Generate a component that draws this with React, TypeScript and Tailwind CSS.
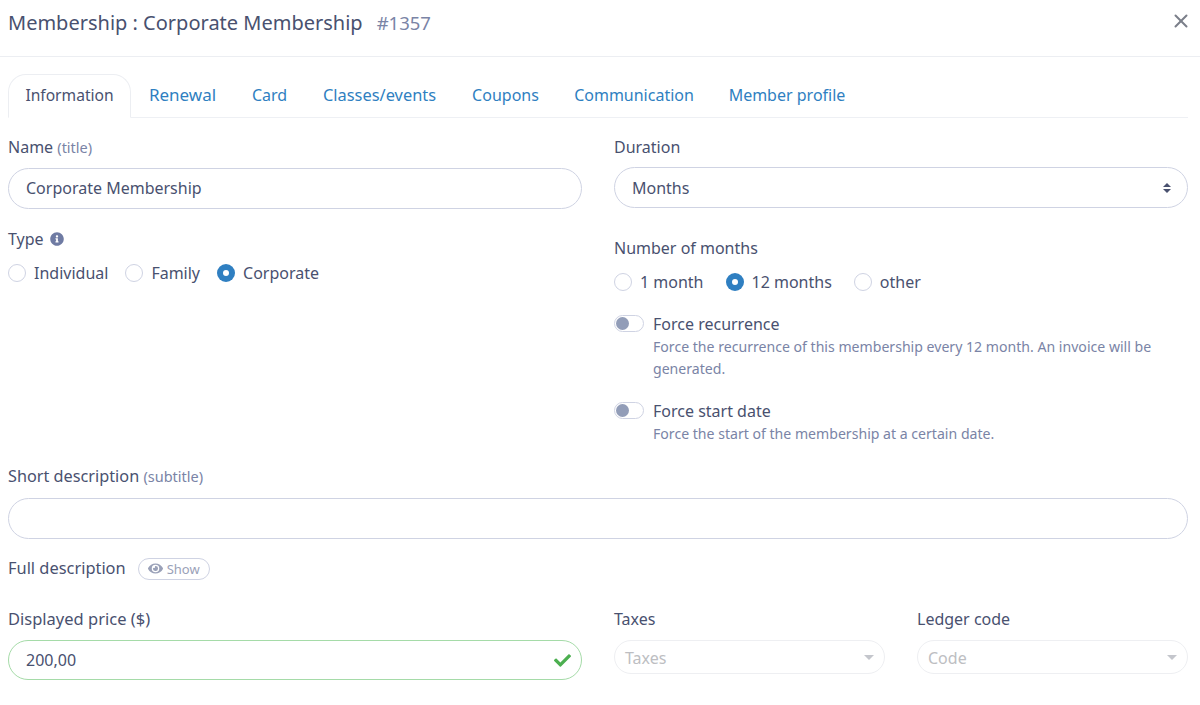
import React from 'react';
import { X } from 'lucide-react';
import { FaCheck, FaEye, FaInfoCircle } from 'react-icons/fa';

const Radio = ({ label, checked = false }: { label: string; checked?: boolean }) => (
  <div className="flex items-center gap-[8px]">
    {checked ? (
      <span className="flex h-[18px] w-[18px] items-center justify-center rounded-full bg-[#2f7fc1]">
        <span className="h-[6px] w-[6px] rounded-full bg-white" />
      </span>
    ) : (
      <span className="h-[18px] w-[18px] rounded-full border border-[#cfd3e3] bg-white" />
    )}
    <span>{label}</span>
  </div>
);

const Toggle = ({ title, children }: { title: string; children: React.ReactNode }) => (
  <div className="flex gap-[9px]">
    <span className="mt-[3px] flex h-[17px] w-[30px] shrink-0 items-center rounded-full border border-[#cfd3e3] bg-white pl-[1px]">
      <span className="h-[13px] w-[13px] rounded-full bg-[#929db8]" />
    </span>
    <div>
      <div className="leading-[24px]">{title}</div>
      <div className="text-[14.1px] leading-[22px] text-[#7a84a6]">{children}</div>
    </div>
  </div>
);

const Caret = () => (
  <span className="h-0 w-0 border-x-[5px] border-t-[5px] border-x-transparent border-t-[#c4c6cc]" />
);

const DisabledSelect = ({ text }: { text: string }) => (
  <div className="flex h-[34px] items-center justify-between rounded-full border border-[#eeeff2] pl-[10px] pr-[10px] text-[#bdbec2]">
    <span className="pt-[2px]">{text}</span>
    <Caret />
  </div>
);

const tabs = [
  { label: 'Renewal', cls: 'w-[103px] text-[17px]' },
  { label: 'Card', cls: 'w-[71px]' },
  { label: 'Classes/events', cls: 'w-[149px] text-[16.4px]' },
  { label: 'Coupons', cls: 'w-[103px]' },
  { label: 'Communication', cls: 'w-[154px]' },
  { label: 'Member profile', cls: 'w-[152px]' },
];

const App = () => {
  return (
    <div className="h-[705px] w-[1200px] overflow-hidden bg-white font-['Noto_Sans',sans-serif] text-[16px] text-[#49516f]">
      {/* Header */}
      <div className="flex h-[57px] items-start justify-between border-b border-[#eceef2] px-2 pt-[7px]">
        <div className="flex items-center leading-[32px]">
          <span className="text-[20px]">Membership : Corporate Membership</span>
          <span className="ml-[14px] text-[18.5px] text-[#7a84a6]">#1357</span>
        </div>
        <X className="mt-[3px] h-[22px] w-[22px] text-[#7b7f8a]" strokeWidth={2.2} />
      </div>

      <div className="pl-2 pr-3">
        {/* Tabs */}
        <div className="mt-[17px] flex h-[44px] border-b border-[#eef0f4]">
          <div className="mb-[-1px] flex h-[44px] w-[123px] items-center justify-center rounded-t-[18px] border border-b-white border-[#eceef2] bg-white text-[15.6px]">
            Information
          </div>
          {tabs.map((t) => (
            <div key={t.label} className={`flex items-center justify-center pb-[1px] text-[#2f7fc1] ${t.cls}`}>
              {t.label}
            </div>
          ))}
        </div>

        {/* Top columns */}
        <div className="mt-[17px] grid grid-cols-2 gap-x-[32px]">
          <div>
            <div className="leading-[24px]">
              Name <span className="text-[14.5px] text-[#7a84a6]">(title)</span>
            </div>
            <div className="mt-[9px] flex h-[41px] items-center rounded-full border border-[#cfd3e3] px-[17px] pb-[2px]">
              Corporate Membership
            </div>
            <div className="mt-[18px] flex items-center gap-[6px] leading-[24px]">
              Type
              <FaInfoCircle className="h-[14px] w-[14px] text-[#6f7ba3]" />
            </div>
            <div className="mt-[10px] flex gap-[17px] leading-[24px]">
              <Radio label="Individual" />
              <Radio label="Family" />
              <Radio label="Corporate" checked />
            </div>
          </div>

          <div>
            <div className="leading-[24px]">Duration</div>
            <div className="mt-[8px] flex h-[41px] items-center justify-between rounded-full border border-[#cfd3e3] pl-[17px] pr-[16px]">
              <span>Months</span>
              <span className="flex flex-col gap-[2px]">
                <span className="h-0 w-0 border-x-[4px] border-b-[4px] border-x-transparent border-b-[#49516f]" />
                <span className="h-0 w-0 border-x-[4px] border-t-[4px] border-x-transparent border-t-[#49516f]" />
              </span>
            </div>
            <div className="mt-[28px] leading-[24px]">Number of months</div>
            <div className="mt-[10px] flex gap-[22px] leading-[24px]">
              <Radio label="1 month" />
              <Radio label="12 months" checked />
              <Radio label="other" />
            </div>
            <div className="mt-[18px]">
              <Toggle title="Force recurrence">
                Force the recurrence of this membership every 12 month. An invoice will be generated.
              </Toggle>
            </div>
            <div className="mt-[19px]">
              <Toggle title="Force start date">Force the start of the membership at a certain date.</Toggle>
            </div>
          </div>
        </div>

        {/* Short description */}
        <div className="mt-[19px] text-[16.25px] leading-[24px]">
          Short description <span className="text-[14.5px] text-[#7a84a6]">(subtitle)</span>
        </div>
        <div className="mt-[10px] h-[41px] rounded-full border border-[#cfd3e3]" />

        {/* Full description */}
        <div className="mt-[17px] flex items-center gap-[12px] text-[16.4px] leading-[24px]">
          Full description
          <span className="mt-[1px] flex h-[22px] items-center gap-[4px] rounded-full border border-[#cfd3e3] px-[9px] text-[13px] text-[#9aa1b8]">
            <FaEye className="h-[15px] w-[15px] text-[#9aa1b8]" />
            Show
          </span>
        </div>

        {/* Price row */}
        <div className="mt-[27px] grid grid-cols-2 gap-x-[32px]">
          <div>
            <div className="text-[16.5px] leading-[24px]">Displayed price ($)</div>
            <div className="mt-[9px] flex h-[40px] items-center justify-between rounded-full border border-[#a5dba8] pl-[17px] pr-[10px]">
              <span>200,00</span>
              <FaCheck className="h-[17px] w-[17px] text-[#4caf50]" />
            </div>
          </div>
          <div className="grid grid-cols-2 gap-x-[32px]">
            <div>
              <div className="leading-[24px]">Taxes</div>
              <div className="mt-[9px]">
                <DisabledSelect text="Taxes" />
              </div>
            </div>
            <div>
              <div className="leading-[24px]">Ledger code</div>
              <div className="mt-[9px]">
                <DisabledSelect text="Code" />
              </div>
            </div>
          </div>
        </div>
      </div>
    </div>
  );
};

export default App;
